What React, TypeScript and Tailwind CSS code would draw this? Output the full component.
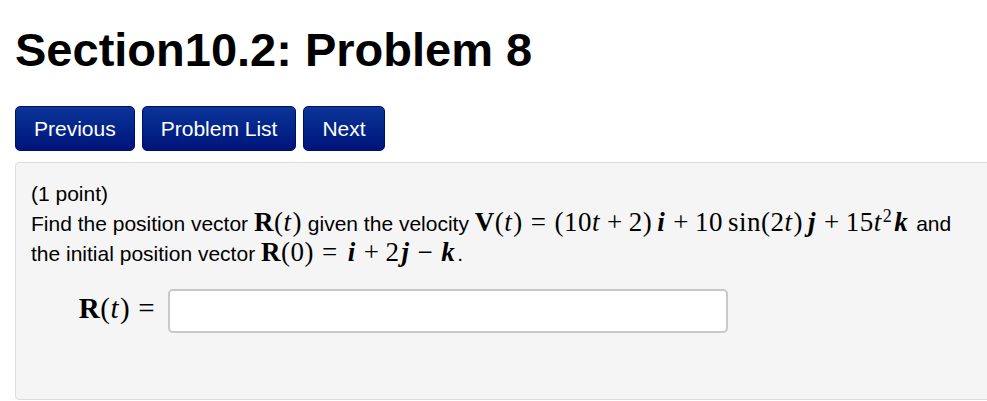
import React from 'react';

const M = ({ children, className = 'text-[27px]' }: { children: React.ReactNode; className?: string }) => (
  <span className={`font-['Liberation_Serif',serif] tracking-[0.5px] leading-[20px] ${className}`}>{children}</span>
);

const B = ({ c }: { c: string }) => <span className="font-bold">{c}</span>;
const BI = ({ c }: { c: string }) => <span className="px-[2px] font-bold italic">{c}</span>;
const I = ({ c }: { c: string }) => <span className="italic pr-[1px]">{c}</span>;
const Rel = ({ c }: { c: string }) => <span className="mx-[8px]">{c}</span>;
const Bin = ({ c }: { c: string }) => <span className="mx-[6px]">{c}</span>;

function NavButton({ label }: { label: string }) {
  return (
    <button className="h-[45px] rounded-[5px] border border-[#001060] bg-gradient-to-b from-[#0d3499] to-[#00137a] px-[18px] text-[21px] text-white">
      {label}
    </button>
  );
}

export default function App() {
  return (
    <div className="h-[401px] w-[987px] overflow-hidden bg-white font-['Liberation_Sans',Arial,sans-serif] text-black">
      <h1 className="pl-[15px] pt-[22px] text-[47px] font-bold leading-[56px]">Section10.2: Problem 8</h1>

      <div className="mt-[28px] flex gap-[7px] pl-[15px]">
        <NavButton label="Previous" />
        <NavButton label="Problem List" />
        <NavButton label="Next" />
      </div>

      <div className="ml-[15px] mt-[11px] h-[238px] w-[990px] rounded-[4px] border border-[#dcdcdc] bg-[#f5f5f5] px-[15px] pt-[16px] text-[21px] leading-[30px]">
        <div>(1 point)</div>
        <div>
          Find the position vector{' '}
          <M>
            <B c="R" />(<I c="t" />)
          </M>{' '}
          given the velocity{' '}
          <M>
            <B c="V" />(<I c="t" />)<Rel c="=" />(10<I c="t" />
            <Bin c="+" />2)<span className="ml-[3px]" />
            <BI c="i" />
            <Bin c="+" />
            10<span className="ml-[5px]">sin</span>(2<I c="t" />)<span className="ml-[3px]" />
            <BI c="j" />
            <Bin c="+" />
            15<I c="t" />
            <sup className="text-[18px]">2</sup>
            <BI c="k" />
          </M>{' '}
          and
          <br />
          the initial position vector{' '}
          <M>
            <B c="R" />
            (0)
            <Rel c="=" />
            <BI c="i" />
            <Bin c="+" />
            2<BI c="j" />
            <Bin c="−" />
            <BI c="k" />
          </M>
          .
        </div>

        <div className="mt-[20px] flex items-center">
          <div className="w-[137px] pr-[13px] text-right">
            <M className="text-[29px]">
              <B c="R" />(<I c="t" />)<span className="ml-[8px]">=</span>
            </M>
          </div>
          <input
            type="text"
            className="h-[44px] w-[560px] rounded-[5px] border-2 border-[#c8c8c8] bg-white px-2 outline-none"
          />
        </div>
      </div>
    </div>
  );
}
